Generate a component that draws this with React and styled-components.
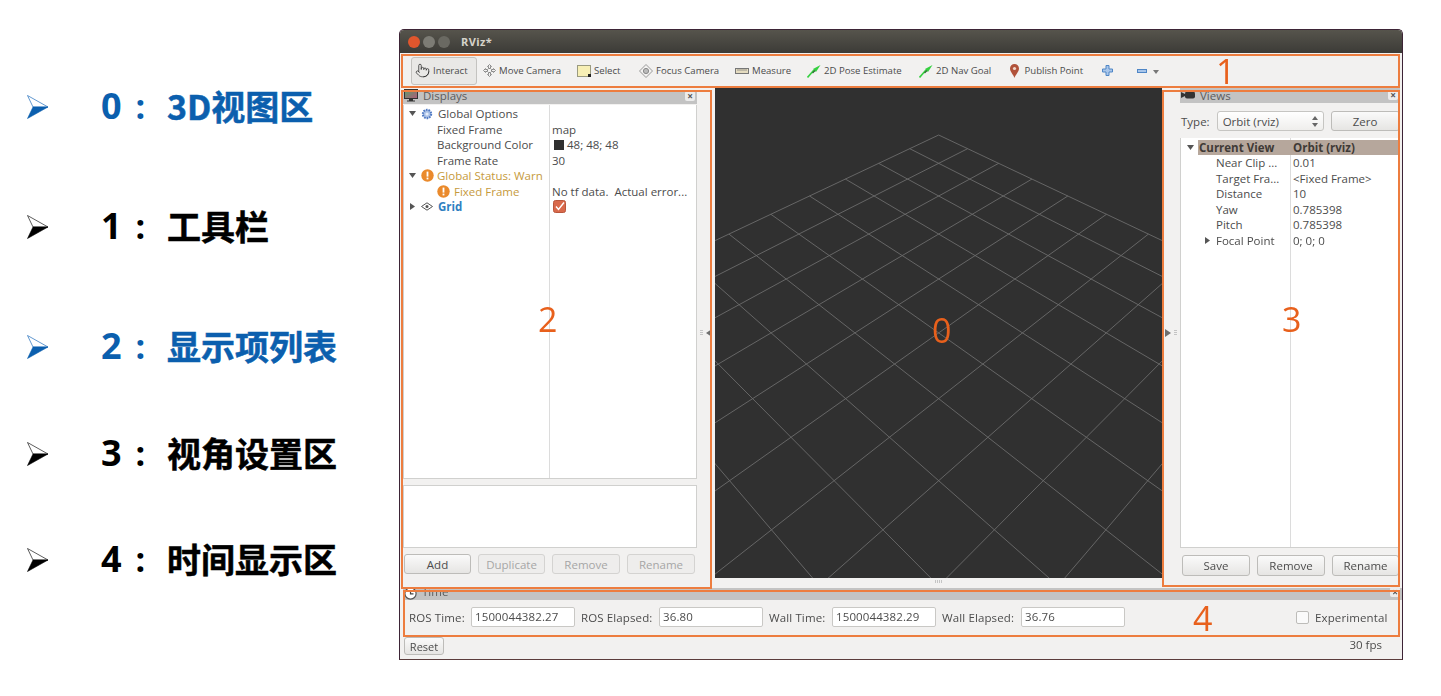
import React from 'react';
import styled, { createGlobalStyle } from 'styled-components';
import { Pointer } from 'lucide-react';

const GlobalStyle = createGlobalStyle`
  html, body {
    margin: 0;
    background: #fff;
    overflow: hidden;
  }
`;

const uiFont = `"Open Sans", "Noto Sans", sans-serif`;

const Page = styled.div`
  display: flex;
  width: 1441px;
  height: 696px;
  background: #fff;
`;

/* left hand legend */
const Legend = styled.ul`
  width: 399px;
  flex: none;
  margin: 0;
  padding: 85px 0 0 27px;
  box-sizing: border-box;
  list-style: none;
  font-size: 34px;
  font-weight: 700;
`;

const LegendRow = styled.li`
  display: flex;
  align-items: center;
  height: 40px;
  margin-bottom: ${p => p.$gap}px;
  color: ${p => (p.$blue ? '#0b5fae' : '#000')};
`;

const Bullet = styled.svg`
  flex: none;
  margin-top: 4px;
`;

const Key = styled.span`
  width: 66px;
  margin-left: 52px;
  flex: none;
  white-space: nowrap;
  font-family: "Open Sans", "Noto Sans CJK SC", sans-serif;
  font-size: 36px;
  font-weight: 700;
`;

const Colon = styled.span`
  margin-left: 14px;
  font-size: 34px;
`;

const Label = styled.span`
  font-family: "Noto Sans CJK SC", sans-serif;
  white-space: nowrap;
  -webkit-text-stroke: 0.5px currentColor;
`;

const BulletIcon = ({ color }) => (
  <Bullet width="22" height="24" viewBox="0 0 22 24">
    <path d="M0.5 0.5 L21 12 L6 12 Z" fill="#fff" stroke={color === '#000' ? '#333' : '#3b7fc4'} strokeWidth="0.8" />
    <path d="M0.5 23.5 L21 12 L6 12 Z" fill={color} stroke={color} strokeWidth="0.6" />
  </Bullet>
);

/* RViz window */
const Window = styled.div`
  position: relative;
  margin-top: 29px;
  width: 1004px;
  height: 631px;
  box-sizing: border-box;
  border: 1px solid #3d2436;
  border-bottom-color: #5b3c3c;
  border-radius: 5px 5px 0 0;
  background: #f2f1f0;
  display: flex;
  flex-direction: column;
  font-family: ${uiFont};
  font-size: 11.5px;
  color: #4c4c4c;
  filter: blur(0.35px);
`;

const TitleBar = styled.div`
  height: 23px;
  flex: none;
  display: flex;
  align-items: center;
  padding-left: 8px;
  background: linear-gradient(#56544c, #3c3b37);
  border-radius: 4px 4px 0 0;
`;

const WinDot = styled.span`
  width: 12px;
  height: 12px;
  margin-right: 3px;
  border-radius: 50%;
  background: ${p => p.$color};
`;

const TitleText = styled.span`
  margin-left: 8px;
  font-size: 11px;
  font-weight: 700;
  letter-spacing: 0.4px;
  color: #d6d3ca;
`;

const Toolbar = styled.div`
  height: 35px;
  flex: none;
  display: flex;
  align-items: center;
  padding-left: 11px;
  box-sizing: border-box;
  font-size: 9.6px;
  background: #f2f1f0;
`;

const ToolItem = styled.div`
  display: flex;
  align-items: center;
  gap: 3px;
  flex: none;
  box-sizing: border-box;
  width: ${p => p.$w}px;
  white-space: nowrap;
`;

const ActiveTool = styled(ToolItem)`
  height: 28px;
  padding-left: 3px;
  margin-right: 6px;
  border: 1px solid #c4c3c0;
  border-radius: 3px;
  background: #e9e8e6;
`;

const Main = styled.div`
  height: 498px;
  flex: none;
  display: flex;
`;

const DisplaysPanel = styled.section`
  width: 297px;
  flex: none;
  padding: 2px 0 0 3px;
  box-sizing: border-box;
  display: flex;
  flex-direction: column;
`;

const Splitter = styled.div`
  width: 18px;
  flex: none;
  display: flex;
  align-items: center;
  justify-content: center;
  gap: 3px;
  padding-bottom: 8px;
  box-sizing: border-box;
`;

const Grip = styled.span`
  width: 3px;
  height: 6px;
  background: repeating-linear-gradient(#c4c4c4 0 1px, transparent 1px 2px);
`;

const ViewColumn = styled.div`
  width: 447px;
  flex: none;
  display: flex;
  flex-direction: column;
  align-items: center;
`;

const Viewport = styled.div`
  position: relative;
  width: 447px;
  height: 490px;
  background: #303030;
  overflow: hidden;
`;

const BottomGrip = styled.div`
  width: 8px;
  height: 3px;
  margin-top: 2px;
  background: repeating-linear-gradient(90deg, #c4c4c4 0 1px, transparent 1px 2px);
`;

const ViewsPanel = styled.section`
  width: 222px;
  flex: none;
  padding-right: 2px;
  box-sizing: border-box;
  display: flex;
  flex-direction: column;
`;

const PanelHeader = styled.header`
  height: ${p => p.$h}px;
  flex: none;
  display: flex;
  align-items: center;
  gap: 5px;
  padding-left: 1px;
  padding-bottom: ${p => p.$lift || 0}px;
  box-sizing: border-box;
  background: #c3c3c3;
  color: #5c5c5c;
`;

const CloseBox = styled.span`
  width: 10px;
  height: 10px;
  margin-left: auto;
  margin-right: 2px;
  border-radius: 2px;
  background: #ececec;
  color: #555;
  font-size: 10px;
  font-weight: 700;
  line-height: 10px;
  text-align: center;
`;

const Tree = styled.div`
  height: ${p => p.$h}px;
  flex: none;
  margin-top: ${p => p.$top}px;
  padding-top: ${p => p.$pt}px;
  box-sizing: border-box;
  border: 1px solid #d0d0ce;
  border-top: 0;
  background: linear-gradient(#dcdcdc, #dcdcdc) ${p => p.$split}px 0 / 1px 100% no-repeat, #fff;
`;

const TreeRow = styled.div`
  display: grid;
  grid-template-columns: ${p => p.$split}px 1fr;
  height: 15.5px;
  line-height: 15.5px;
  white-space: nowrap;
  ${p => p.$head && 'background: linear-gradient(90deg, #fff 17px, #b6a79c 17px); font-weight: 700; color: #3f3a36;'}
`;

const NameCell = styled.div`
  display: flex;
  align-items: center;
  padding-left: ${p => p.$pad}px;
  color: ${p => p.$color || 'inherit'};
  font-weight: ${p => (p.$bold ? 700 : 'inherit')};
`;

const ValueCell = styled.div`
  display: flex;
  align-items: center;
  gap: 3px;
  padding-left: 3px;
`;

const Swatch = styled.span`
  width: 10px;
  height: 10px;
  margin-left: 2px;
  background: #303030;
`;

const DescBox = styled.div`
  height: 63px;
  flex: none;
  margin-top: 6px;
  box-sizing: border-box;
  border: 1px solid #d0d0ce;
  background: #fff;
`;

const ButtonRow = styled.div`
  display: flex;
  flex: none;
  gap: 7px;
  margin-top: ${p => p.$top}px;
  padding-left: ${p => p.$left}px;
`;

const Btn = styled.button`
  width: ${p => p.$w}px;
  height: ${p => p.$h}px;
  padding: 0;
  flex: none;
  box-sizing: border-box;
  border: 1px solid ${p => (p.disabled ? '#d4d3d1' : '#bdbcb9')};
  border-radius: 3px;
  background: ${p => (p.disabled ? '#eeedec' : 'linear-gradient(#fafafa, #e6e5e3)')};
  color: ${p => (p.disabled ? '#a6a6a6' : '#4c4c4c')};
  font-family: inherit;
  font-size: 11.5px;
`;

const TypeRow = styled.div`
  display: flex;
  align-items: center;
  height: 20px;
  margin-top: 8px;
  padding-left: 1px;
  flex: none;
`;

const SelectBox = styled.div`
  width: 107px;
  height: 20px;
  margin-left: 7px;
  padding: 0 5px;
  flex: none;
  box-sizing: border-box;
  display: flex;
  align-items: center;
  justify-content: space-between;
  border: 1px solid #c6c5c2;
  border-radius: 3px;
  background: linear-gradient(#fff, #efeeec);
`;

const ZeroBtn = styled(Btn)`
  margin-left: 7px;
`;

const TimePanel = styled.section`
  height: 50px;
  flex: none;
  padding: 2px 0 0 3px;
  box-sizing: border-box;
  display: flex;
  flex-direction: column;
`;

const TimeFields = styled.div`
  display: flex;
  align-items: center;
  height: 36px;
  padding: 0 14px 2px 6px;
  box-sizing: border-box;
  white-space: nowrap;
`;

const FieldLabel = styled.span`
  width: ${p => p.$w}px;
  flex: none;
  letter-spacing: 0.12px;
`;

const FieldValue = styled.span`
  width: 104px;
  height: 20px;
  margin-right: 6px;
  padding-left: 3px;
  box-sizing: border-box;
  flex: none;
  border: 1px solid #c9c8c5;
  border-radius: 2px;
  background: #fff;
  line-height: 18px;
  letter-spacing: 0.12px;
`;

const Check = styled.span`
  width: 11px;
  height: 11px;
  margin-left: auto;
  margin-right: 6px;
  border: 1px solid #bdbcb9;
  border-radius: 2px;
  background: #fafafa;
`;

const StatusBar = styled.footer`
  height: 23px;
  flex: none;
  display: flex;
  align-items: flex-start;
  justify-content: space-between;
  padding: 1px 20px 0 4px;
`;

const ResetBtn = styled(Btn)`
  font-size: 11px;
`;

const Fps = styled.span`
  margin-top: 0;
`;

/* orange annotations drawn over the screenshot */
const Mark = styled.div`
  position: absolute;
  left: ${p => p.$x}px;
  top: ${p => p.$y}px;
  width: ${p => p.$w}px;
  height: ${p => p.$h}px;
  box-sizing: border-box;
  border: 2px solid #ed7d3f;
  pointer-events: none;
`;

const Digit = styled.span`
  position: absolute;
  left: ${p => p.$x}px;
  top: ${p => p.$y}px;
  font-family: "Open Sans", sans-serif;
  font-size: 34px;
  line-height: 30px;
  color: #e8601c;
`;

/* icons */
const Caret = ({ open, left = 0, right = 0 }) => (
  <svg width="7" height="7" viewBox="0 0 7 7" style={{ marginLeft: left, marginRight: right, flex: 'none' }}>
    <path d={open ? 'M0 1 H7 L3.5 6 Z' : 'M1 0 V7 L6 3.5 Z'} fill="#555" />
  </svg>
);

const Warn = ({ right = 0 }) => (
  <svg width="13" height="13" viewBox="0 0 13 13" style={{ marginRight: right, flex: 'none' }}>
    <circle cx="6.5" cy="6.5" r="6.2" fill="#ea8a2c" />
    <rect x="5.6" y="2.6" width="1.8" height="5" fill="#fff" />
    <rect x="5.6" y="8.6" width="1.8" height="1.8" fill="#fff" />
  </svg>
);

const Gear = ({ right = 0 }) => (
  <svg width="12" height="12" viewBox="0 0 12 12" style={{ marginRight: right, flex: 'none' }}>
    <circle cx="6" cy="6" r="4.2" fill="#a9c0e6" stroke="#4f79c2" strokeWidth="2" strokeDasharray="1.6 1" />
    <circle cx="6" cy="6" r="1.6" fill="#e6eefa" />
  </svg>
);

const GridEye = ({ right = 0 }) => (
  <svg width="12" height="9" viewBox="0 0 12 9" style={{ marginRight: right, flex: 'none' }}>
    <path d="M0.5 4.5 L6 0.8 L11.5 4.5 L6 8.2 Z" fill="none" stroke="#555" strokeWidth="1" />
    <circle cx="6" cy="4.5" r="1.5" fill="#555" />
  </svg>
);

const CheckMark = () => (
  <svg width="13" height="13" viewBox="0 0 13 13" style={{ marginLeft: 1 }}>
    <rect x="0.5" y="0.5" width="12" height="12" rx="2" fill="#d9694b" stroke="#b9563c" />
    <path d="M3 6.5 L5.5 9.5 L11 2.5" fill="none" stroke="#fff" strokeWidth="1.4" />
  </svg>
);

const Monitor = () => (
  <svg width="14" height="13" viewBox="0 0 14 13" style={{ flex: 'none' }}>
    <defs>
      <linearGradient id="scr" x1="0" x2="1" y1="0" y2="1">
        <stop offset="0" stopColor="#5aa06a" />
        <stop offset="1" stopColor="#b05a7a" />
      </linearGradient>
    </defs>
    <rect x="0.5" y="0.5" width="13" height="9" fill="url(#scr)" stroke="#333" />
    <path d="M5 10 H9 V11.5 H11 V12.5 H3 V11.5 H5 Z" fill="#333" />
  </svg>
);

const ViewCam = () => (
  <svg width="14" height="8" viewBox="0 0 14 8" style={{ flex: 'none' }}>
    <path d="M0 1 L4 3 V5 L0 7 Z" fill="#333" />
    <rect x="4" y="0.5" width="10" height="7" rx="2" fill="#333" />
  </svg>
);

const Clock = () => (
  <svg width="13" height="13" viewBox="0 0 13 13" style={{ marginTop: 3, flex: 'none' }}>
    <circle cx="6.5" cy="6.5" r="5.6" fill="#fff" stroke="#555" strokeWidth="1.2" />
    <path d="M6.5 3.5 V6.8 H9.5" fill="none" stroke="#444" strokeWidth="1.2" />
  </svg>
);

const MoveIcon = () => (
  <svg width="13" height="13" viewBox="0 0 13 13" fill="none" stroke="#888" strokeWidth="1">
    <path d="M6.5 0.5 L8.5 2.5 H7.5 V4.5 H5.5 V2.5 H4.5 Z M6.5 12.5 L8.5 10.5 H7.5 V8.5 H5.5 V10.5 H4.5 Z M0.5 6.5 L2.5 4.5 V5.5 H4.5 V7.5 H2.5 V8.5 Z M12.5 6.5 L10.5 4.5 V5.5 H8.5 V7.5 H10.5 V8.5 Z" />
  </svg>
);

const SelectIcon = () => (
  <svg width="14" height="12" viewBox="0 0 14 12">
    <rect x="0.5" y="0.5" width="13" height="11" fill="#f7efb5" stroke="#9a9a80" />
    <rect x="11" y="9" width="3" height="3" fill="#222" />
  </svg>
);

const FocusIcon = () => (
  <svg width="14" height="14" viewBox="0 0 14 14" fill="none" stroke="#999">
    <path d="M7 0.5 L13.5 7 L7 13.5 L0.5 7 Z" />
    <circle cx="7" cy="7" r="2.6" fill="#bbb" stroke="#888" />
  </svg>
);

const MeasureIcon = () => (
  <svg width="14" height="6" viewBox="0 0 14 6">
    <rect x="0.5" y="0.5" width="13" height="5" fill="#e5dcc0" stroke="#777" />
    <path d="M3 1 V3 M5 1 V3 M7 1 V3 M9 1 V3 M11 1 V3" stroke="#777" strokeWidth="0.7" />
  </svg>
);

const PoseIcon = () => (
  <svg width="14" height="14" viewBox="0 0 14 14">
    <path d="M0.5 13.5 L7 6" stroke="#35d040" strokeWidth="1.6" />
    <path d="M13.5 1 L6 5 L9 8 Z" fill="#35d040" />
    <path d="M5.5 9 L8 6.5" stroke="#2a6a30" strokeWidth="1.2" />
  </svg>
);

const PinIcon = () => (
  <svg width="9" height="14" viewBox="0 0 9 14">
    <path d="M4.5 14 C3.5 10.5 0 8 0 4.5 A4.5 4.5 0 0 1 9 4.5 C9 8 5.5 10.5 4.5 14 Z" fill="#b1523a" />
    <circle cx="4.5" cy="4.5" r="1.6" fill="#f0d8cc" />
  </svg>
);

const PlusIcon = () => (
  <svg width="11" height="11" viewBox="0 0 11 11">
    <path d="M4 0.5 H7 V4 H10.5 V7 H7 V10.5 H4 V7 H0.5 V4 H4 Z" fill="#a9c6ea" stroke="#4f86c6" />
  </svg>
);

const MinusIcon = () => (
  <svg width="10" height="4" viewBox="0 0 10 4">
    <rect x="0.5" y="0.5" width="9" height="3" fill="#a9c6ea" stroke="#4f86c6" />
  </svg>
);

const SmallDown = () => (
  <svg width="6" height="4" viewBox="0 0 6 4" style={{ marginLeft: 3, marginTop: 3 }}>
    <path d="M0 0 H6 L3 4 Z" fill="#777" />
  </svg>
);

const Spin = () => (
  <svg width="6" height="11" viewBox="0 0 6 11">
    <path d="M3 0 L6 4 H0 Z M3 11 L6 7 H0 Z" fill="#666" />
  </svg>
);

const SideArrow = ({ left }) => (
  <svg width="6" height="8" viewBox="0 0 6 8">
    <path d={left ? 'M6 0 V8 L0 4 Z' : 'M0 0 V8 L6 4 Z'} fill="#6e6e6e" />
  </svg>
);

/* floor grid, 10 x 10 cells in perspective */
const project = (u, v) => {
  const s = u + v;
  const w = 1 - 0.03317 * s;
  return [
    (716 + (84 * (u - v)) / w) / 3 + 700 - 715,
    (150 + 34.7 * s) / w / 3 + 85 - 88,
  ];
};

const gridLines = [];
for (let i = 0; i <= 10; i++) {
  gridLines.push([project(i, 0), project(i, 10)]);
  gridLines.push([project(0, i), project(10, i)]);
}

const FloorGrid = () => (
  <svg width="447" height="490" viewBox="0 0 447 490">
    {gridLines.map(([a, b], i) => (
      <line key={i} x1={a[0]} y1={a[1]} x2={b[0]} y2={b[1]} stroke="#6c6c6c" strokeWidth="0.9" />
    ))}
  </svg>
);

const legendItems = [
  { k: '0', text: '3D视图区', blue: true, gap: 80 },
  { k: '1', text: '工具栏', gap: 80 },
  { k: '2', text: '显示项列表', blue: true, gap: 67 },
  { k: '3', text: '视角设置区', gap: 66 },
  { k: '4', text: '时间显示区', gap: 0 },
];

const viewRows = [
  ['Near Clip ...', '0.01'],
  ['Target Fra...', '<Fixed Frame>'],
  ['Distance', '10'],
  ['Yaw', '0.785398'],
  ['Pitch', '0.785398'],
];

const App = () => (
  <Page>
    <GlobalStyle />
    <Legend>
      {legendItems.map(item => (
        <LegendRow key={item.k} $blue={item.blue} $gap={item.gap}>
          <BulletIcon color={item.blue ? '#0b5fae' : '#000'} />
          <Key>{item.k}<Colon>:</Colon></Key>
          <Label>{item.text}</Label>
        </LegendRow>
      ))}
    </Legend>

    <Window>
      <TitleBar>
        <WinDot $color="#e0562d" />
        <WinDot $color="#7d7c75" />
        <WinDot $color="#6a6962" />
        <TitleText>RViz*</TitleText>
      </TitleBar>

      <Toolbar>
        <ActiveTool $w={66}><Pointer size={15} strokeWidth={1.3} color="#333" />Interact</ActiveTool>
        <ToolItem $w={94}><MoveIcon />Move Camera</ToolItem>
        <ToolItem $w={62}><SelectIcon />Select</ToolItem>
        <ToolItem $w={96}><FocusIcon />Focus Camera</ToolItem>
        <ToolItem $w={72}><MeasureIcon />Measure</ToolItem>
        <ToolItem $w={112}><PoseIcon />2D Pose Estimate</ToolItem>
        <ToolItem $w={91}><PoseIcon />2D Nav Goal</ToolItem>
        <ToolItem $w={92}><PinIcon />&nbsp;Publish Point</ToolItem>
        <ToolItem $w={35}><PlusIcon /></ToolItem>
        <ToolItem $w={30}><MinusIcon /><SmallDown /></ToolItem>
      </Toolbar>

      <Main>
        <DisplaysPanel>
          <PanelHeader $h={14} $lift={3}>
            <Monitor />Displays<CloseBox>×</CloseBox>
          </PanelHeader>
          <Tree $h={374} $top={1} $pt={1} $split={145}>
            <TreeRow $split={145}>
              <NameCell $pad={5}><Caret open right={5} /><Gear right={5} />Global Options</NameCell>
              <ValueCell />
            </TreeRow>
            <TreeRow $split={145}><NameCell $pad={33}>Fixed Frame</NameCell><ValueCell>map</ValueCell></TreeRow>
            <TreeRow $split={145}>
              <NameCell $pad={33}>Background Color</NameCell>
              <ValueCell><Swatch />48; 48; 48</ValueCell>
            </TreeRow>
            <TreeRow $split={145}><NameCell $pad={33}>Frame Rate</NameCell><ValueCell>30</ValueCell></TreeRow>
            <TreeRow $split={145}>
              <NameCell $pad={5} $color="#c69a3c"><Caret open right={5} /><Warn right={3} />Global Status: Warn</NameCell>
              <ValueCell />
            </TreeRow>
            <TreeRow $split={145}>
              <NameCell $pad={33} $color="#c69a3c"><Warn right={4} />Fixed Frame</NameCell>
              <ValueCell>No tf data.&nbsp; Actual error...</ValueCell>
            </TreeRow>
            <TreeRow $split={145}>
              <NameCell $pad={5} $color="#2f7fc1" $bold><Caret right={5} /><GridEye right={5} />Grid</NameCell>
              <ValueCell><CheckMark /></ValueCell>
            </TreeRow>
          </Tree>
          <DescBox />
          <ButtonRow $top={6} $left={1}>
            <Btn $w={67} $h={20}>Add</Btn>
            <Btn $w={67} $h={20} disabled>Duplicate</Btn>
            <Btn $w={68} $h={20} disabled>Remove</Btn>
            <Btn $w={68} $h={20} disabled>Rename</Btn>
          </ButtonRow>
        </DisplaysPanel>

        <Splitter><Grip /><SideArrow left /></Splitter>

        <ViewColumn>
          <Viewport><FloorGrid /></Viewport>
          <BottomGrip />
        </ViewColumn>

        <Splitter><SideArrow /><Grip /></Splitter>

        <ViewsPanel>
          <PanelHeader $h={15} $lift={1}>
            <ViewCam />Views<CloseBox>×</CloseBox>
          </PanelHeader>
          <TypeRow>
            Type:
            <SelectBox>Orbit (rviz)<Spin /></SelectBox>
            <ZeroBtn $w={69} $h={20}>Zero</ZeroBtn>
          </TypeRow>
          <Tree $h={410} $top={7} $pt={1.5} $split={109}>
            <TreeRow $split={109} $head>
              <NameCell $pad={6}><Caret open right={5} />Current View</NameCell>
              <ValueCell>Orbit (rviz)</ValueCell>
            </TreeRow>
            {viewRows.map(([name, value]) => (
              <TreeRow $split={109} key={name}>
                <NameCell $pad={35}>{name}</NameCell>
                <ValueCell>{value}</ValueCell>
              </TreeRow>
            ))}
            <TreeRow $split={109}>
              <NameCell $pad={23}><Caret right={5} />Focal Point</NameCell>
              <ValueCell>0; 0; 0</ValueCell>
            </TreeRow>
          </Tree>
          <ButtonRow $top={7} $left={2}>
            <Btn $w={68} $h={21}>Save</Btn>
            <Btn $w={68} $h={21}>Remove</Btn>
            <Btn $w={67} $h={21}>Rename</Btn>
          </ButtonRow>
        </ViewsPanel>
      </Main>

      <TimePanel>
        <PanelHeader $h={12} $lift={5}>
          <Clock />Time<CloseBox>×</CloseBox>
        </PanelHeader>
        <TimeFields>
          <FieldLabel $w={62}>ROS Time:</FieldLabel><FieldValue>1500044382.27</FieldValue>
          <FieldLabel $w={78}>ROS Elapsed:</FieldLabel><FieldValue>36.80</FieldValue>
          <FieldLabel $w={63}>Wall Time:</FieldLabel><FieldValue>1500044382.29</FieldValue>
          <FieldLabel $w={79}>Wall Elapsed:</FieldLabel><FieldValue>36.76</FieldValue>
          <Check />
          <FieldLabel $w={73}>Experimental</FieldLabel>
        </TimeFields>
      </TimePanel>

      <StatusBar>
        <ResetBtn $w={40} $h={18}>Reset</ResetBtn>
        <Fps>30 fps</Fps>
      </StatusBar>

      <Mark $x={1} $y={24} $w={999} $h={34} />
      <Mark $x={1} $y={60} $w={311} $h={499} />
      <Mark $x={762} $y={60} $w={238} $h={497} />
      <Mark $x={3} $y={560} $w={997} $h={47} />
      <Digit $x={816} $y={26}>1</Digit>
      <Digit $x={138} $y={274}>2</Digit>
      <Digit $x={882} $y={274}>3</Digit>
      <Digit $x={532} $y={285}>0</Digit>
      <Digit $x={793} $y={573}>4</Digit>
    </Window>
  </Page>
);

export default App;
